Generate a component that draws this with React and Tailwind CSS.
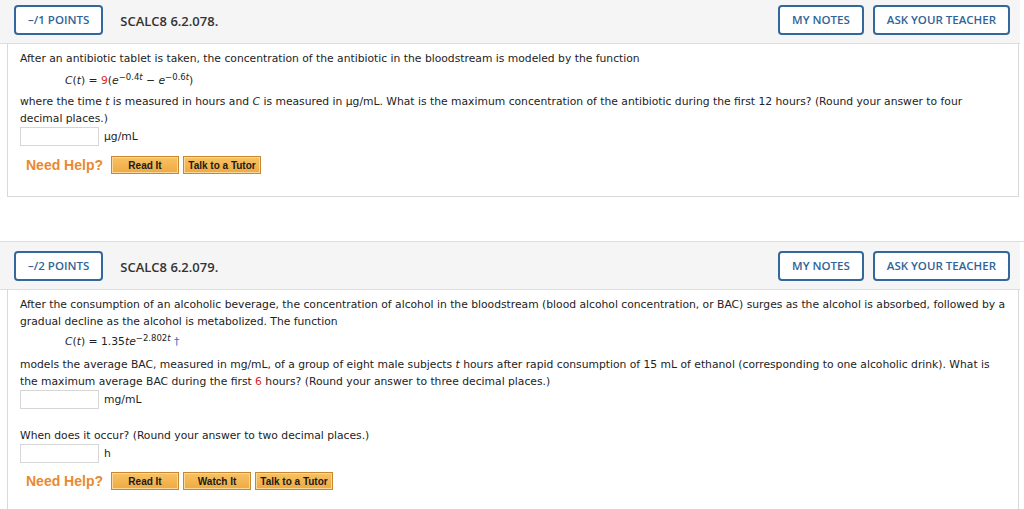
import React from 'react';

const body = { fontFamily: '"DejaVu Sans", Verdana, sans-serif' };
const head = { fontFamily: '"Open Sans", "Liberation Sans", sans-serif' };
const arial = { fontFamily: '"Liberation Sans", Arial, sans-serif' };

function OutlineBtn({ children }) {
  return (
    <button
      style={head}
      className="h-[30px] px-[12px] border-2 border-[#33689c] rounded-[4px] bg-white text-[11.5px] font-semibold text-[#2f6497] leading-none"
    >
      {children}
    </button>
  );
}

function HelpBtn({ children, w }) {
  return (
    <span
      style={arial}
      className={`${w} h-[18px] flex items-center justify-center border border-[#c9872f] bg-gradient-to-b from-[#f7c264] to-[#f0a93f] shadow-[inset_0_0_0_1px_#fad79a] text-[10px] font-bold text-[#1a1a1a]`}
    >
      {children}
    </span>
  );
}

function Header({ points, code, cls }) {
  return (
    <div className={`w-[1020px] flex items-start bg-[#f5f5f5] border-b border-[#dedede] pl-[14px] pr-[10px] ${cls}`}>
      <OutlineBtn>–/{points} POINTS</OutlineBtn>
      <span style={head} className="ml-[17px] mt-[7px] text-[13px] font-semibold text-[#333]">
        {code}
      </span>
      <div className="ml-auto flex gap-[9px]">
        <OutlineBtn>MY NOTES</OutlineBtn>
        <OutlineBtn>ASK YOUR TEACHER</OutlineBtn>
      </div>
    </div>
  );
}

function Answer({ unit }) {
  return (
    <div className="flex items-center h-[19px]">
      <span className="w-[79px] h-[19px] border border-[#d6d6d6] bg-white" />
      <span className="ml-[5px]">{unit}</span>
    </div>
  );
}

function NeedHelp({ buttons, cls }) {
  return (
    <div className={`flex items-center gap-[4px] pl-[6px] ${cls}`}>
      <span style={arial} className="text-[14px] leading-[18px] font-bold text-[#e9892e] mr-[4px]">
        Need Help?
      </span>
      {buttons.map(b => (
        <HelpBtn key={b[0]} w={b[1]}>{b[0]}</HelpBtn>
      ))}
    </div>
  );
}

export default function App() {
  return (
    <div className="w-[1024px] h-[509px] overflow-hidden bg-white text-[#222]">
      {/* card 1 */}
      <Header points="1" code="SCALC8 6.2.078." cls="h-[44px] pt-[5px]" />
      <div
        style={body}
        className="ml-[7px] w-[1012px] h-[153px] border-l border-r border-b border-[#d9d9d9] pl-[12px] pr-[10px] pt-[6px] text-[10.75px] leading-[17px]"
      >
        <p>After an antibiotic tablet is taken, the concentration of the antibiotic in the bloodstream is modeled by the function</p>
        <p className="pl-[45px] mt-[5px]">
          <i>C</i>(<i>t</i>) = <span className="text-[#e0261f]">9</span>(<i>e</i>
          <sup className="text-[8.5px]">−0.4<i>t</i></sup> − <i>e</i>
          <sup className="text-[8.5px]">−0.6<i>t</i></sup>)
        </p>
        <p className="mt-[4px]">
          where the time <i>t</i> is measured in hours and <i>C</i> is measured in µg/mL. What is the maximum concentration of the antibiotic during the first 12 hours? (Round your answer to four
          <br />
          decimal places.)
        </p>
        <Answer unit="µg/mL" />
        <NeedHelp cls="mt-[10px]" buttons={[['Read It', 'w-[68px]'], ['Talk to a Tutor', 'w-[78px]']]} />
      </div>

      <div className="h-[44px]" />

      {/* card 2 */}
      <div className="border-t border-[#dedede]">
        <Header points="2" code="SCALC8 6.2.079." cls="h-[48px] pt-[9px]" />
      </div>
      <div
        style={body}
        className="ml-[7px] w-[1012px] h-[230px] border-l border-r border-[#d9d9d9] pl-[12px] pr-[10px] pt-[6px] text-[10.75px] leading-[17px]"
      >
        <p>
          After the consumption of an alcoholic beverage, the concentration of alcohol in the bloodstream (blood alcohol concentration, or BAC) surges as the alcohol is absorbed, followed by a gradual decline as the alcohol is metabolized. The function
        </p>
        <p className="pl-[45px] mt-[3px]">
          <i>C</i>(<i>t</i>) = 1.35<i>te</i>
          <sup className="text-[8.5px]">−2.802<i>t</i></sup>{' '}
          <span className="text-[#3a6fd0]">†</span>
        </p>
        <p className="mt-[6px]">
          models the average BAC, measured in mg/mL, of a group of eight male subjects <i>t</i> hours after rapid consumption of 15 mL of ethanol (corresponding to one alcoholic drink). What is the maximum average BAC during the first <span className="text-[#e0261f]">6</span> hours? (Round your answer to three decimal places.)
        </p>
        <Answer unit="mg/mL" />
        <p className="mt-[18px]">When does it occur? (Round your answer to two decimal places.)</p>
        <Answer unit="h" />
        <NeedHelp
          cls="mt-[9px]"
          buttons={[['Read It', 'w-[68px]'], ['Watch It', 'w-[68px]'], ['Talk to a Tutor', 'w-[78px]']]}
        />
      </div>
    </div>
  );
}
